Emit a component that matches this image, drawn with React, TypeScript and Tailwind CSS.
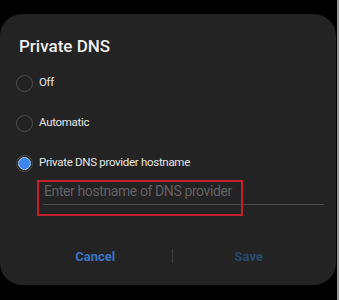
const Radio = ({ checked }: { checked?: boolean }) => (
  <div className="w-[17px] h-[17px] rounded-full border border-[#4e4e4e] flex items-center justify-center shrink-0">
    {checked && (
      <div className="w-[13px] h-[13px] rounded-full bg-[#3d86f0] border-[1.5px] border-[#a9c9f5]"></div>
    )}
  </div>
);

const options = [
  { label: "Off", checked: false },
  { label: "Automatic", checked: false },
  { label: "Private DNS provider hostname", checked: true },
];

export default function App() {
  return (
    <div className="w-[339px] h-[300px] bg-black flex font-['Roboto',sans-serif] overflow-hidden">
      <div className="w-[336px] h-[271px] mt-[14px] bg-[#232323] rounded-[22px] flex flex-col">
        <h2 className="pl-[19px] mt-[22px] text-[17px] leading-[20px] font-medium text-[#efefef]">
          Private DNS
        </h2>

        <div className="mt-[7px] flex flex-col">
          {options.map((o) => (
            <div key={o.label} className="h-[40px] pl-[16px] flex items-center gap-[6px]">
              <Radio checked={o.checked} />
              <span className="text-[11.5px] tracking-[-0.3px] text-[#e6e6e6]">{o.label}</span>
            </div>
          ))}
        </div>

        {/* hostname field */}
        <div className="relative -mt-px ml-[43px] mr-[12px]">
          <div className="h-[23px] pl-[1px] border-b border-[#4a4a4a] text-[14px] leading-[18px] tracking-[-0.4px] text-[#626262]">
            Enter hostname of DNS provider
          </div>
          {/* red highlight box */}
          <div className="absolute left-[-6px] top-[-2px] w-[206px] h-[36px] border-2 border-[#c4202b]"></div>
        </div>

        <div className="mt-auto mb-[19px] pl-[19px] pr-[11px] flex items-center">
          <div className="flex-1 text-center text-[13px] font-bold text-[#3975c4]">Cancel</div>
          <div className="w-px h-[14px] bg-[#3e3e3e]"></div>
          <div className="flex-1 text-center text-[13px] font-bold text-[#264a6e]">Save</div>
        </div>
      </div>
      <div className="ml-auto w-[2px] h-full bg-[#9a9a9a]"></div>
    </div>
  );
}
